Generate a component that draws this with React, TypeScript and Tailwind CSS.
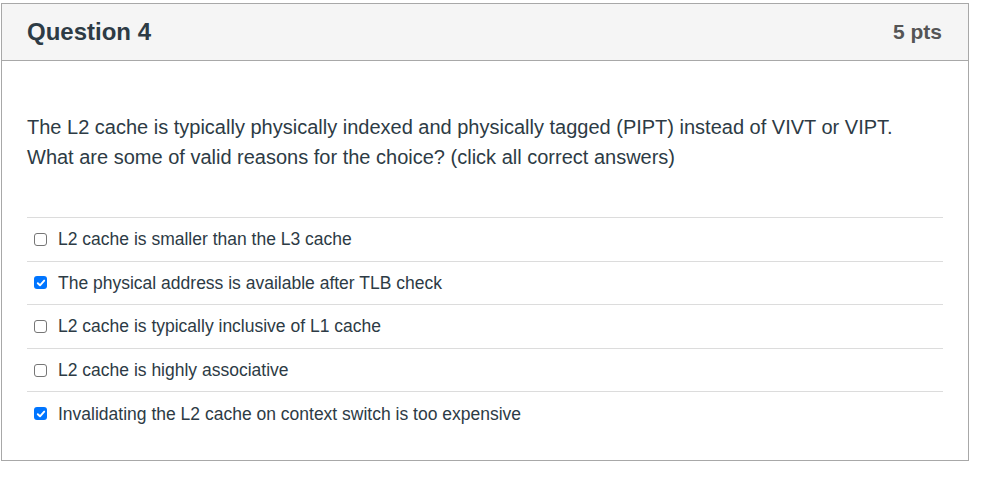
const answers = [
  { text: 'L2 cache is smaller than the L3 cache', checked: false },
  { text: 'The physical address is available after TLB check', checked: true },
  { text: 'L2 cache is typically inclusive of L1 cache', checked: false },
  { text: 'L2 cache is highly associative', checked: false },
  { text: 'Invalidating the L2 cache on context switch is too expensive', checked: true },
]

function Checkbox({ checked }: { checked: boolean }) {
  if (checked) {
    return (
      <span className="flex h-[13px] w-[13px] shrink-0 items-center justify-center rounded-[3px] bg-[#0075ff]">
        <svg width="10" height="10" viewBox="0 0 10 10">
          <path d="M1.8 5.2 L4 7.3 L8.2 2.6" fill="none" stroke="white" strokeWidth="1.9" strokeLinecap="round" strokeLinejoin="round" />
        </svg>
      </span>
    )
  }
  return <span className="h-[13px] w-[13px] shrink-0 rounded-[3px] border border-[#767676] bg-white" />
}

export default function App() {
  return (
    <div className="min-h-screen bg-white pl-[1px] pt-[3px] font-['Liberation_Sans',Arial,sans-serif] text-[#2d3b45]">
      <div className="w-[968px] border border-[#a8a8a8]">
        {/* header */}
        <div className="flex h-[57px] items-center justify-between border-b border-[#a8a8a8] bg-[#f5f5f5] px-[25px]">
          <h2 className="text-[24px] font-bold">Question 4</h2>
          <span className="mr-[1px] text-[21px] font-bold text-[#555]">5 pts</span>
        </div>

        {/* body */}
        <div className="px-[25px] pb-[25px] pt-[51px]">
          <p className="text-[20px] leading-[30px]">
            The L2 cache is typically physically indexed and physically tagged (PIPT) instead of VIVT or VIPT.
            <br />
            What are some of valid reasons for the choice? (click all correct answers)
          </p>

          <div className="mt-[45px]">
            {answers.map((a, i) => (
              <div
                key={i}
                className="flex h-[43.6px] items-center gap-[11px] border-t border-[#dcdcdc] pl-[7px] text-[17.5px]"
              >
                <Checkbox checked={a.checked} />
                <span>{a.text}</span>
              </div>
            ))}
          </div>
        </div>
      </div>
    </div>
  )
}
